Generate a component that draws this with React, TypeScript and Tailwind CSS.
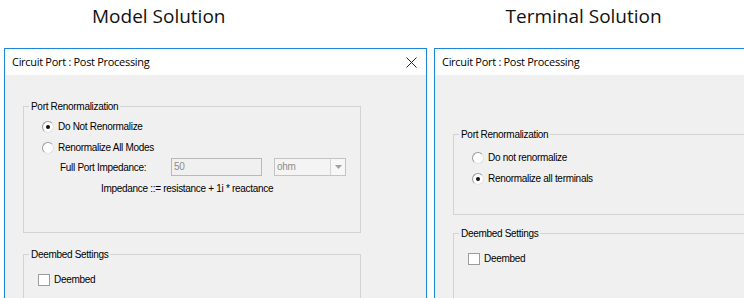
const Radio = ({ checked, label }: { checked?: boolean; label: string }) => (
  <div className="flex items-center h-[21px]">
    <span className="flex items-center justify-center w-[12px] h-[12px] rounded-full border border-[#9a9a9a] border-r-[#e2e2e2] border-b-[#e2e2e2] bg-white">
      {checked && <span className="w-[4px] h-[4px] rounded-full bg-[#111]" />}
    </span>
    <span className="ml-[4px]">{label}</span>
  </div>
);

const Checkbox = ({ label }: { label: string }) => (
  <div className="flex items-center h-[13px]">
    <span className="w-[12px] h-[12px] border border-[#9c9c9c] bg-white" />
    <span className="ml-[4px]">{label}</span>
  </div>
);

const Group = ({ title, className, children }: { title: string; className: string; children?: React.ReactNode }) => (
  <fieldset className={`border border-[#d3d3d3] ${className}`}>
    <legend className="ml-[5px] px-[2px] leading-[13px]">{title}</legend>
    {children}
  </fieldset>
);

const TitleBar = ({ close }: { close?: boolean }) => (
  <div className="flex items-center justify-between h-[26px] bg-white pl-[7px] pr-[9px] [font-family:'Open_Sans',sans-serif] text-[11px] tracking-[-0.3px] text-black">
    <span>Circuit Port : Post Processing</span>
    {close && (
      <svg width="11" height="11" viewBox="0 0 11 11" className="text-[#222]">
        <path d="M0.5 0.5 L10.5 10.5 M10.5 0.5 L0.5 10.5" stroke="currentColor" strokeWidth="1" />
      </svg>
    )}
  </div>
);

export default function App() {
  return (
    <div className="w-[744px] h-[298px] overflow-hidden bg-white [font-family:'Liberation_Sans',Arial,sans-serif] text-[10px] tracking-[-0.3px] text-black">
      <div className="flex h-[48px] [font-family:'Open_Sans',sans-serif] text-[19px] tracking-normal leading-[32px] text-[#111]">
        <span className="ml-[92px]">Model Solution</span>
        <span className="ml-[280px]">Terminal Solution</span>
      </div>

      <div className="flex items-start">
        {/* model solution dialog */}
        <div className="ml-[4px] w-[423px] h-[260px] shrink-0 border border-[#1c87d9]">
          <TitleBar close />
          <div className="bg-[#f0f0f0] h-full pl-[18px] pt-[25px]">
            <Group title="Port Renormalization" className="w-[338px] h-[133px]">
              <div className="pl-[18px] mt-[3px]">
                <Radio checked label="Do Not Renormalize" />
                <Radio label="Renormalize All Modes" />
              </div>
              <div className="flex items-center h-[18px] pl-[36px]">
                <span className="w-[111px]">Full Port Impedance:</span>
                <div className="w-[91px] h-[18px] border border-[#b9b9b9] bg-[#f0f0f0] pl-[2px] leading-[16px] text-[#8d8d8d]">50</div>
                <div className="ml-[12px] w-[72px] h-[18px] flex border border-[#c3c3c3] bg-[#f4f4f4] text-[#8d8d8d]">
                  <span className="flex-1 pl-[2px] leading-[16px]">ohm</span>
                  <span className="w-[15px] flex items-center justify-center border-l border-[#d5d5d5] bg-[#f7f7f7]">
                    <svg width="7" height="4" viewBox="0 0 7 4"><path d="M0 0 L7 0 L3.5 4 Z" fill="#a0a0a0" /></svg>
                  </span>
                </div>
              </div>
              <div className="mt-[6px] pl-[77px] leading-[13px]">Impedance ::= resistance + 1i * reactance</div>
            </Group>
            <Group title="Deembed Settings" className="mt-[15px] w-[338px] h-[80px]">
              <div className="pl-[14px] mt-[12px]">
                <Checkbox label="Deembed" />
              </div>
            </Group>
          </div>
        </div>

        {/* terminal solution dialog */}
        <div className="ml-[7px] w-[400px] h-[260px] shrink-0 border border-[#1c87d9]">
          <TitleBar />
          <div className="bg-[#f0f0f0] h-full pl-[18px] pt-[53px]">
            <Group title="Port Renormalization" className="w-[340px] h-[87px]">
              <div className="pl-[18px] mt-[6px]">
                <Radio label="Do not renormalize" />
                <Radio checked label="Renormalize all terminals" />
              </div>
            </Group>
            <Group title="Deembed Settings" className="mt-[12px] w-[340px] h-[80px]">
              <div className="pl-[14px] mt-[12px]">
                <Checkbox label="Deembed" />
              </div>
            </Group>
          </div>
        </div>
      </div>
    </div>
  );
}
